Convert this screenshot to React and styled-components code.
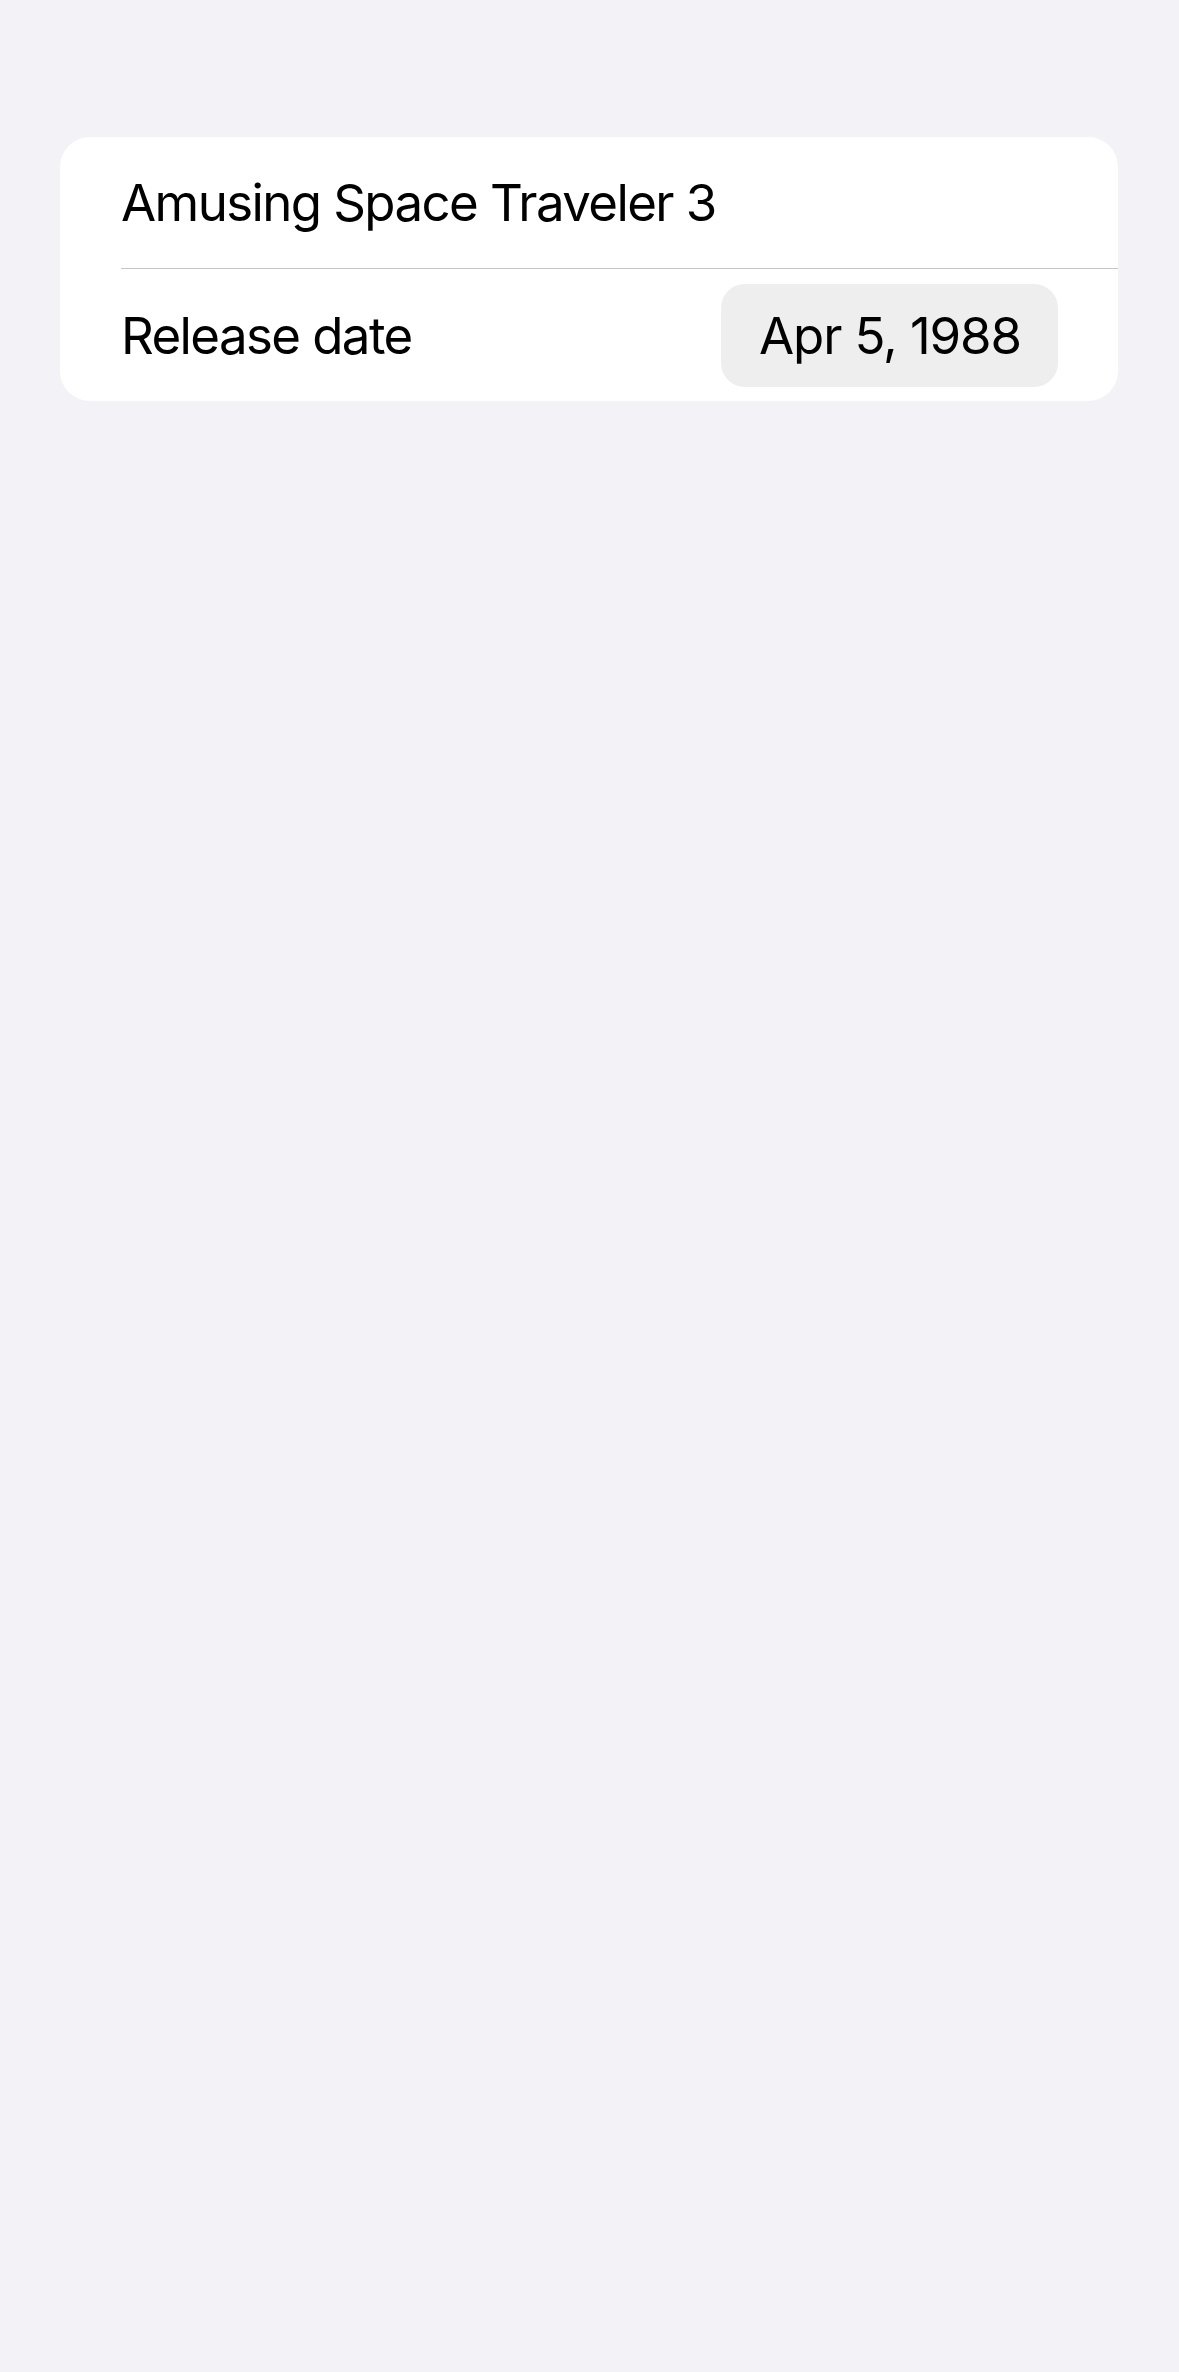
import styled, { createGlobalStyle } from "styled-components"

const Global = createGlobalStyle`
  html, body {
    margin: 0;
    padding: 0;
    background: #f2f2f7;
  }
  body {
    font-family: Inter, "Noto Sans", "Liberation Sans", sans-serif;
    color: #000;
    -webkit-font-smoothing: antialiased;
  }
`

const Page = styled.div`
  min-height: 100vh;
  box-sizing: border-box;
  padding: 137px 61px 0 60px;
`

const Card = styled.div`
  background: #ffffff;
  border-radius: 30px;
  overflow: hidden;
`

const Row = styled.div`
  display: flex;
  align-items: center;
  justify-content: space-between;
  height: ${props => props.tall ? "131px" : "132px"};
  padding: 0 60px 0 61px;
  box-sizing: border-box;
`

const Label = styled.span`
  font-size: 51px;
  letter-spacing: -1.6px;
  line-height: 1;
`

const Divider = styled.div`
  height: 1px;
  margin-left: 61px;
  background: #c6c6c8;
`

const DatePill = styled.button`
  height: 103px;
  padding: 0 37px 0 38px;
  border: none;
  border-radius: 24px;
  background: #eeeeef;
  font-family: inherit;
  font-size: 51px;
  letter-spacing: -1.1px;
  color: #000;
  cursor: pointer;
`

export default function App() {
  return (
    <>
      <Global />
      <Page>
        <Card>
          <Row tall>
            <Label>Amusing Space Traveler 3</Label>
          </Row>
          <Divider />
          <Row>
            <Label>Release date</Label>
            <DatePill>Apr 5, 1988</DatePill>
          </Row>
        </Card>
      </Page>
    </>
  )
}
